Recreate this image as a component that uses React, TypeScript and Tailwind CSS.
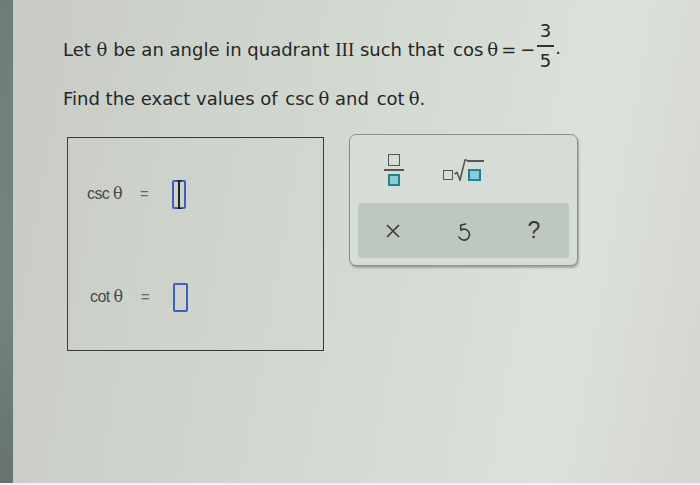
import React from "react";

const sans = { fontFamily: '"DejaVu Sans", Verdana, sans-serif' };

function Theta({ gap = false }: { gap?: boolean }) {
  return <span className={gap ? "font-['DejaVu_Serif',serif] ml-[4px]" : "font-['DejaVu_Serif',serif]"}>θ</span>;
}

function Cursor() {
  return (
    <div className="flex flex-col items-center">
      <div className="w-[5px] h-[1px] bg-[#222]" />
      <div className="w-[1.5px] h-[27px] bg-[#222]" />
      <div className="w-[5px] h-[1px] bg-[#222]" />
    </div>
  );
}

function FracIcon() {
  return (
    <div className="flex flex-col items-center gap-[3px]">
      <div className="w-[12px] h-[12px] border-[1.5px] border-[#555]" />
      <div className="w-[20px] h-[2px] bg-[#555]" />
      <div className="w-[12px] h-[12px] border-[2px] border-[#1f8394] bg-[#8ccbd3]" />
    </div>
  );
}

function SqrtIcon() {
  return (
    <div className="flex items-end">
      <div className="w-[10px] h-[10px] border-[1.5px] border-[#555] mb-[1px]" />
      <svg width="13" height="22" viewBox="0 0 13 22" className="ml-[1px]">
        <path d="M0.5 15 L3 13.5 L6 21 L11 1 L13 1" fill="none" stroke="#555" strokeWidth="1.6" />
      </svg>
      <div className="flex flex-col">
        <div className="w-[17px] h-[1.6px] bg-[#555] mb-[7px]" />
        <div className="w-[13px] h-[12px] border-[2px] border-[#1f8394] bg-[#8ccbd3] ml-[1px]" />
      </div>
    </div>
  );
}

export default function App() {
  return (
    <div
      className="w-[700px] h-[485px] flex flex-col overflow-hidden bg-[linear-gradient(100deg,#c8cac3_0%,#ced4cc_30%,#d3dbd2_55%,#dde1db_80%,#d3d6cf_100%)] text-[#262626]"
      style={sans}
    >
      <div className="flex flex-1">
        <div className="w-[13px] bg-[linear-gradient(180deg,#6f7d79_0%,#74847e_60%,#66736f_100%)]" />
        <div className="flex-1 pl-[50px] pt-[21px] flex flex-col">
          {/* line 1 */}
          <div className="flex items-center h-[50px] text-[18px]">
            <span className="pt-[8px] leading-[22px] whitespace-pre">
              Let <Theta /> be an angle in quadrant <span className="font-['Liberation_Serif',serif] text-[19px]">III</span> such that <span className="ml-[3px]">cos</span><Theta gap /><span className="ml-[3px]">=</span>
            </span>
            <span className="pt-[8px] leading-[22px] ml-[4px]">−</span>
            <div className="flex flex-col items-center w-[20px]">
              <span className="leading-[20px]">3</span>
              <div className="w-[17px] h-[1.5px] bg-[#333] my-[4px]" />
              <span className="leading-[20px]">5</span>
            </div>
            <span className="pt-[4px] leading-[22px]">.</span>
          </div>
          {/* line 2 */}
          <div className="mt-[17px] text-[18px] leading-[22px] whitespace-pre">
            Find the exact values of <span className="ml-[2px]">csc</span><Theta gap /> and <span className="ml-[2px]">cot</span><Theta gap />.
          </div>

          {/* answer area */}
          <div className="flex items-start mt-[24px]">
            <div className="ml-[4px] mt-[3px] w-[257px] h-[214px] border-[1.5px] border-[#3a3a3a] pt-[42px] pl-[19px] font-['Liberation_Sans',sans-serif] text-[#4a4a4a]">
              <div className="flex items-center h-[28px]">
                <span className="w-[53px] text-[16px] tracking-[-0.6px]">csc <Theta /></span>
                <span className="w-[32px] text-[15px] text-[#666]">=</span>
                <div className="w-[14px] h-[29px] border-[2px] border-[#3f5fc0] rounded-[2px] flex items-center justify-center">
                  <Cursor />
                </div>
              </div>
              <div className="flex items-center h-[28px] mt-[75px] pl-[3px]">
                <span className="w-[51px] text-[16px] tracking-[-0.6px]">cot <Theta /></span>
                <span className="w-[32px] text-[15px] text-[#666]">=</span>
                <div className="w-[15px] h-[29px] border-[2px] border-[#3f5fc0] rounded-[2px]" />
              </div>
            </div>

            <div className="ml-[25px] w-[229px] h-[132px] border border-[#8a8f89] rounded-[7px] bg-[#d6ddd6] shadow-[1px_2px_2px_rgba(0,0,0,0.25)] px-[8px] pb-[7px] flex flex-col">
              <div className="grid grid-cols-3 h-[68px] items-center px-[1px]">
                <div className="flex justify-center pt-[1px]">
                  <FracIcon />
                </div>
                <div className="flex justify-center pt-[2px]">
                  <SqrtIcon />
                </div>
                <div />
              </div>
              <div className="flex-1 grid grid-cols-3 items-center bg-[#bfc8bf] rounded-[3px]">
                <div className="flex justify-center">
                  <svg width="16" height="16" viewBox="0 0 16 16">
                    <path d="M2 2 L14 14 M14 2 L2 14" stroke="#3a3a3a" strokeWidth="1.6" />
                  </svg>
                </div>
                <div className="flex justify-center">
                  <svg width="15" height="20" viewBox="0 0 15 20">
                    <path d="M9.5 3 L4.5 4.2 L5 9" fill="none" stroke="#3a3a3a" strokeWidth="1.6" strokeLinejoin="round" strokeLinecap="round" />
                    <path d="M5 9 A5.5 5.5 0 1 1 3 16" fill="none" stroke="#3a3a3a" strokeWidth="1.6" strokeLinecap="round" />
                  </svg>
                </div>
                <div className="flex justify-center text-[23px] text-[#3a3a3a] font-['Liberation_Sans',sans-serif] leading-none">
                  ?
                </div>
              </div>
            </div>
          </div>
        </div>
      </div>
      <div className="h-[2px] bg-[#f2f2f2]" />
    </div>
  );
}
